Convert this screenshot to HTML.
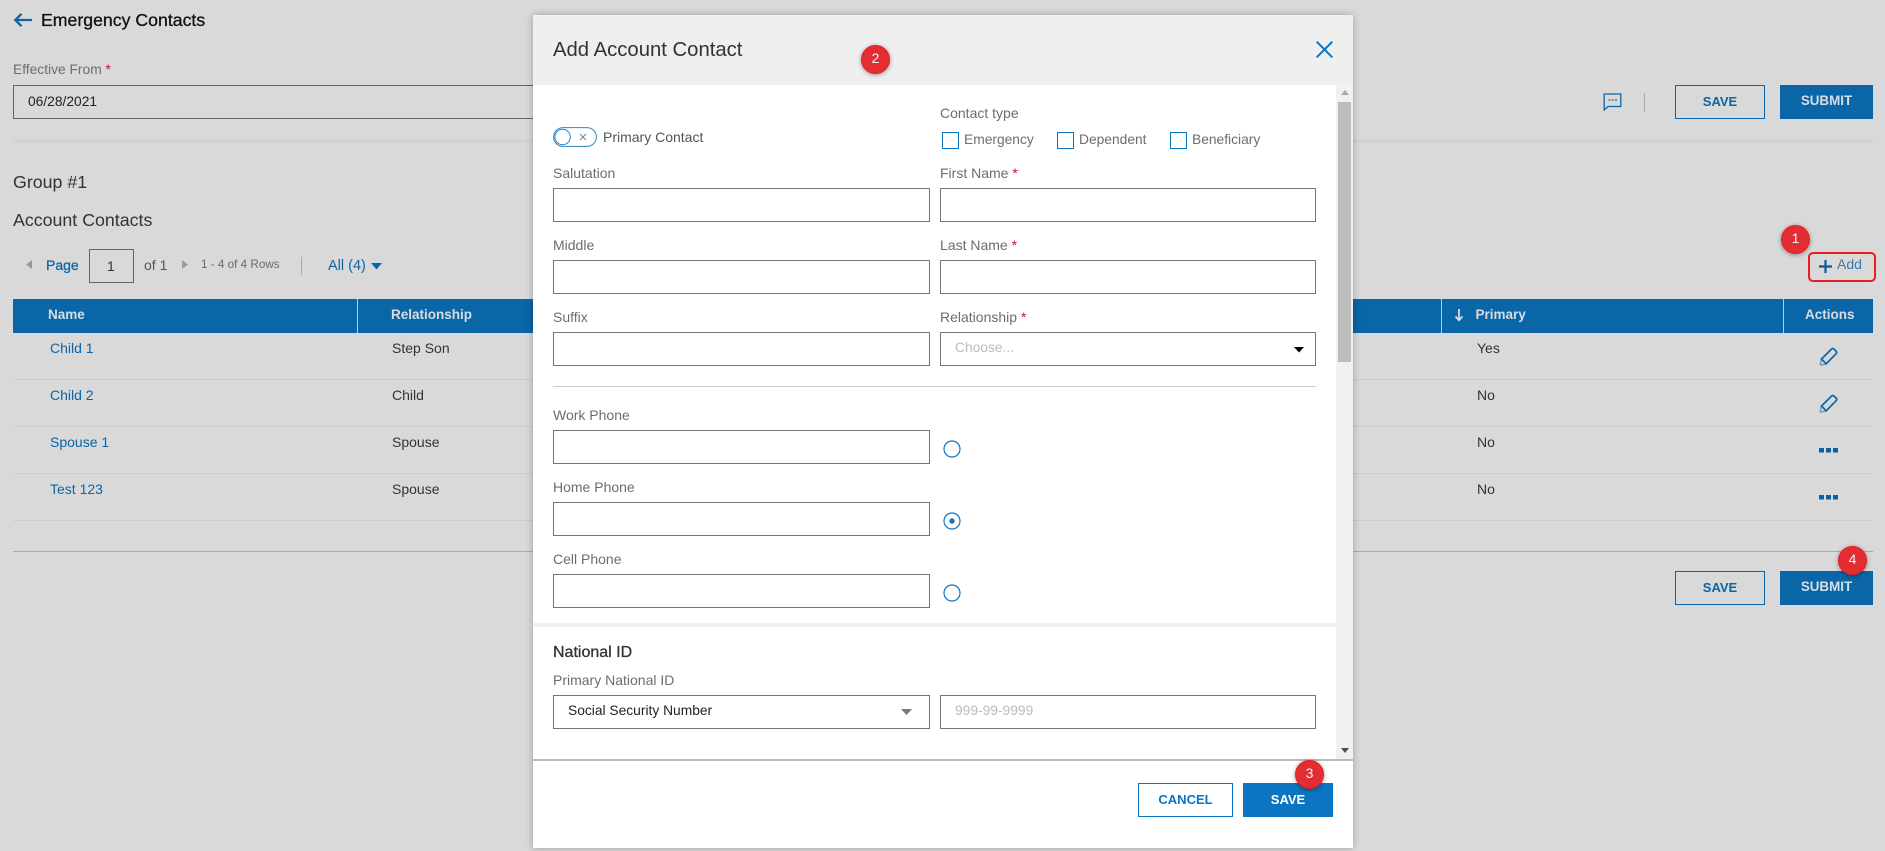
<!DOCTYPE html>
<html lang="en"><head><meta charset="utf-8"><title>Emergency Contacts</title>
<style>
html,body{margin:0;padding:0;width:1885px;height:851px;overflow:hidden;background:#d9d9d9;font-family:"Liberation Sans",Arial,sans-serif}
#p{position:relative;width:1885px;height:851px;overflow:hidden}
#p div,#p span.a,#p svg{position:absolute}
.t{position:absolute;white-space:nowrap;line-height:20px;height:20px;font-size:14px}
.l{color:#6d6d6d}
.d{color:#333}
.b{color:#0a66a6}
.m{-webkit-text-stroke:.3px currentColor}
.r{color:#c8102e}
.i{box-sizing:border-box;border:1px solid #757575;background:#fff;height:34px}
.i0{box-sizing:border-box;border:1px solid #666;height:34px}
.h{color:#d6dde3;font-weight:bold;font-size:13.5px}
.ln{left:13px;width:1860px;height:1px;background:#cdcdcd}
.btn{box-sizing:border-box;height:34px;text-align:center;line-height:31px;font-size:13px;font-weight:bold}
.bd{box-sizing:border-box;width:29px;height:29px;border-radius:50%;background:#e22d33;border:1.5px solid #ee1c1c;color:#f4f4f4;text-align:center;font-size:14px;line-height:24px;box-shadow:0 1px 5px rgba(0,0,0,.4);z-index:9}
.cb{box-sizing:border-box;width:17px;height:17px;border:1px solid #0b75c1;top:132px}
</style></head><body><div id="p">

<!-- background page -->
<svg style="left:13px;top:12px" width="20" height="16" viewBox="0 0 20 16"><path d="M19 8H2.500M8.500 1.800 2.300 8l6.200 6.200" fill="none" stroke="#0a66a6" stroke-width="2.300"/></svg>
<span class="t m" style="left:41px;top:10px;font-size:17.700px;color:#111">Emergency Contacts</span>
<span class="t l" style="left:13px;top:60px;font-size:13.800px">Effective From <span class="r">*</span></span>
<div class="i0" style="left:13px;top:85px;width:530px"></div>
<span class="t" style="left:28px;top:92px;color:#222;font-size:13.800px">06/28/2021</span>
<div style="left:13px;top:139px;width:1860px;height:4px;background:#d3d3d3"></div>
<span class="t d" style="left:13px;top:172px;font-size:17.800px">Group #1</span>
<span class="t d" style="left:13px;top:210px;font-size:17.800px">Account Contacts</span>

<svg style="left:25px;top:259px" width="8" height="12"><path d="M7 1v9L1 5.500z" fill="#9a9a9a"/></svg>
<span class="t b m" style="left:46px;top:255px">Page</span>
<div class="i0" style="left:89px;top:249px;width:45px"></div>
<span class="t d" style="left:107px;top:256px">1</span>
<span class="t" style="left:144px;top:255px;color:#555">of 1</span>
<svg style="left:181px;top:259px" width="8" height="12"><path d="M1 1v9l6-4.500z" fill="#9a9a9a"/></svg>
<span class="t" style="left:201px;top:255px;font-size:11.700px;color:#6a6a6a">1 - 4 of 4 Rows</span>
<div style="left:301px;top:257px;width:1px;height:18px;background:#aaa"></div>
<span class="t b" style="left:328px;top:256px;font-size:14.500px">All (4)</span>
<svg style="left:371px;top:263px" width="11" height="7"><path d="M0 0h11L5.500 6.500z" fill="#0a66a6"/></svg>

<span class="t" style="left:1837px;top:254px;font-size:14px;color:#3f7aa8">Add</span>
<svg style="left:1819px;top:260px" width="13" height="13"><path d="M6.500 0v13M0 6.500h13" stroke="#0a5a98" stroke-width="2.200"/></svg>
<div style="box-sizing:border-box;left:1808px;top:252px;width:68px;height:30px;border:2px solid #ea1c22;border-radius:5px"></div>
<div class="bd" style="left:1781px;top:225px">1</div>

<svg style="left:1603px;top:93px" width="19" height="18" viewBox="0 0 19 18"><path d="M1.200 1h16.600v12.500H5L1.200 17z" fill="none" stroke="#0a66a6" stroke-width="1.300"/><path d="M5.500 7h1.800M8.800 7h1.800M12.100 7h1.800" stroke="#0a66a6" stroke-width="1.300"/></svg>
<div style="left:1644px;top:93px;width:1px;height:19px;background:#aaa"></div>
<div class="btn b" style="left:1675px;top:85px;width:90px;border:1px solid #0a66a6">SAVE</div>
<div class="btn" style="left:1780px;top:85px;width:93px;background:#0a66a6;line-height:32px;color:#d3dfe8;font-size:13.400px">SUBMIT</div>

<!-- table -->
<div style="left:13px;top:299px;height:34px;background:#0a66a6;width:1860px"></div>
<div style="left:357px;top:299px;width:1px;height:34px;background:#b5c9d8"></div>
<div style="left:1441px;top:299px;width:1px;height:34px;background:#b5c9d8"></div>
<div style="left:1783px;top:299px;width:1px;height:34px;background:#b5c9d8"></div>
<span class="t h" style="left:48px;top:305px">Name</span>
<span class="t h" style="left:391px;top:305px">Relationship</span>
<svg style="left:1454px;top:309px" width="10" height="13" viewBox="0 0 10 13"><path d="M5 0v11M1.500 7.500 5 11.300l3.500-3.800" fill="none" stroke="#d6dde3" stroke-width="1.800"/></svg>
<span class="t h" style="left:1475.500px;top:305px">Primary</span>
<span class="t h" style="left:1805px;top:305px">Actions</span>

<span class="t b" style="left:50px;top:338px">Child 1</span><span class="t d" style="left:392px;top:338px">Step Son</span><span class="t d" style="left:1477px;top:338px">Yes</span>
<div class="ln" style="top:379px"></div>
<span class="t b" style="left:50px;top:385px">Child 2</span><span class="t d" style="left:392px;top:385px">Child</span><span class="t d" style="left:1477px;top:385px">No</span>
<div class="ln" style="top:426px"></div>
<span class="t b" style="left:50px;top:432px">Spouse 1</span><span class="t d" style="left:392px;top:432px">Spouse</span><span class="t d" style="left:1477px;top:432px">No</span>
<div class="ln" style="top:473px"></div>
<span class="t b" style="left:50px;top:479px">Test 123</span><span class="t d" style="left:392px;top:479px">Spouse</span><span class="t d" style="left:1477px;top:479px">No</span>
<div class="ln" style="top:520px"></div>
<div class="ln" style="top:551px;background:#aaa"></div>

<svg style="left:1819px;top:347px" width="19" height="19" viewBox="0 0 19 19"><path d="M1.200 18.200 2.300 12.600" fill="none" stroke="#6f9cbd" stroke-width="1.500"/><path d="M1.200 18.200 7 17" fill="none" stroke="#6f9cbd" stroke-width="1.500"/><path d="M2.500 12 12.500 2.100q1.300-1.200 2.600 0l2 2q1.200 1.300 0 2.600L7.200 16.800z" fill="none" stroke="#0a66a6" stroke-width="1.700"/></svg>
<svg style="left:1819px;top:394px" width="19" height="19" viewBox="0 0 19 19"><path d="M1.200 18.200 2.300 12.600" fill="none" stroke="#6f9cbd" stroke-width="1.500"/><path d="M1.200 18.200 7 17" fill="none" stroke="#6f9cbd" stroke-width="1.500"/><path d="M2.500 12 12.500 2.100q1.300-1.200 2.600 0l2 2q1.200 1.300 0 2.600L7.200 16.800z" fill="none" stroke="#0a66a6" stroke-width="1.700"/></svg>
<svg style="left:1819px;top:448px" width="19" height="5"><path d="M0 0h5v4.500H0zM7 0h5v4.500H7zM14 0h5v4.500h-5z" fill="#0a5fa0"/></svg>
<svg style="left:1819px;top:495px" width="19" height="5"><path d="M0 0h5v4.500H0zM7 0h5v4.500H7zM14 0h5v4.500h-5z" fill="#0a5fa0"/></svg>

<div class="btn b" style="left:1675px;top:571px;width:90px;border:1px solid #0a66a6">SAVE</div>
<div class="btn" style="left:1780px;top:571px;width:93px;background:#0a66a6;line-height:32px;color:#d3dfe8;font-size:13.400px">SUBMIT</div>
<div class="bd" style="left:1838px;top:546px">4</div>

<!-- modal -->
<div style="left:533px;top:15px;width:820px;height:833px;background:#fff;box-shadow:0 0 7px rgba(0,0,0,.28)"></div>
<div style="left:533px;top:15px;width:820px;height:70px;background:#efefef"></div>
<span class="t" style="left:553px;top:40px;font-size:20.300px;color:#333">Add Account Contact</span>
<div class="bd" style="left:861px;top:45px">2</div>
<svg style="left:1316px;top:41px" width="17" height="17" viewBox="0 0 17 17"><path d="M.7.7l15.600 15.600M16.300.7.700 16.300" stroke="#0b75c1" stroke-width="2"/></svg>

<!-- scrollbar -->
<div style="left:1336px;top:85px;width:17px;height:674px;background:#f1f1f1"></div>
<div style="left:1338px;top:102px;width:13px;height:260px;background:#bdbdbd"></div>
<svg style="left:1341px;top:90px" width="8" height="5"><path d="M4 0l4 5H0z" fill="#a8a8a8"/></svg>
<svg style="left:1341px;top:748px" width="8" height="5"><path d="M4 5l4-5H0z" fill="#505050"/></svg>

<svg style="left:553px;top:127px" width="44" height="20" viewBox="0 0 44 20"><rect x=".6" y=".6" width="42.800" height="18.800" rx="9.400" fill="#fff" stroke="#2a86cc" stroke-width="1"/><circle cx="9.600" cy="10" r="7.700" fill="#fff" stroke="#2a7fbf" stroke-width="1"/><path d="M27 7l6 6M33 7l-6 6" stroke="#5d87ad" stroke-width="1"/></svg>
<span class="t l" style="left:603px;top:126.500px;color:#555">Primary Contact</span>

<span class="t l" style="left:940px;top:103px">Contact type</span>
<div class="cb" style="left:942px"></div><span class="t l" style="left:964px;top:130px;font-size:13.800px">Emergency</span>
<div class="cb" style="left:1057px"></div><span class="t l" style="left:1079px;top:130px;font-size:13.800px">Dependent</span>
<div class="cb" style="left:1170px"></div><span class="t l" style="left:1192px;top:130px;font-size:13.800px">Beneficiary</span>

<span class="t l" style="left:553px;top:162.500px">Salutation</span>
<div class="i" style="left:553px;top:188px;width:377px"></div>
<span class="t l" style="left:940px;top:162.500px">First Name <span class="r">*</span></span>
<div class="i" style="left:940px;top:188px;width:376px"></div>

<span class="t l" style="left:553px;top:234.500px">Middle</span>
<div class="i" style="left:553px;top:260px;width:377px"></div>
<span class="t l" style="left:940px;top:234.500px">Last Name <span class="r">*</span></span>
<div class="i" style="left:940px;top:260px;width:376px"></div>

<span class="t l" style="left:553px;top:306.500px">Suffix</span>
<div class="i" style="left:553px;top:332px;width:377px"></div>
<span class="t l" style="left:940px;top:306.500px">Relationship <span class="r">*</span></span>
<div class="i" style="left:940px;top:332px;width:376px"></div>
<span class="t" style="left:955px;top:338px;color:#bbb;font-size:13.800px">Choose...</span>
<svg style="left:1294px;top:347px" width="10" height="6"><path d="M0 0h10L5 5.500z" fill="#000"/></svg>

<div style="left:553px;top:386px;width:763px;height:1px;background:#ccc"></div>

<span class="t l" style="left:553px;top:404.500px">Work Phone</span>
<div class="i" style="left:553px;top:430px;width:377px"></div>
<span class="t l" style="left:553px;top:476.500px">Home Phone</span>
<div class="i" style="left:553px;top:502px;width:377px"></div>
<span class="t l" style="left:553px;top:548.500px">Cell Phone</span>
<div class="i" style="left:553px;top:574px;width:377px"></div>

<svg style="left:943px;top:439.500px" width="18" height="18"><circle cx="9" cy="9" r="8" fill="none" stroke="#0b75c1" stroke-width="1.200"/></svg>
<svg style="left:943px;top:511.500px" width="18" height="18"><circle cx="9" cy="9" r="8" fill="none" stroke="#0b75c1" stroke-width="1.200"/><circle cx="9" cy="9" r="2.700" fill="#0b75c1"/></svg>
<svg style="left:943px;top:583.500px" width="18" height="18"><circle cx="9" cy="9" r="8" fill="none" stroke="#0b75c1" stroke-width="1.200"/></svg>

<div style="left:533px;top:623px;width:803px;height:4px;background:#f0f0f0"></div>
<span class="t m" style="left:553px;top:642.500px;font-size:16px;color:#333">National ID</span>
<span class="t l" style="left:553px;top:669.500px">Primary National ID</span>
<div class="i" style="left:553px;top:695px;width:377px"></div>
<span class="t" style="left:568px;top:700.500px;color:#222;font-size:13.800px">Social Security Number</span>
<svg style="left:901px;top:709px" width="11" height="7"><path d="M0 0h11L5.500 6z" fill="#777"/></svg>
<div class="i" style="left:940px;top:695px;width:376px"></div>
<span class="t" style="left:955px;top:700.500px;color:#bbb;font-size:13.800px">999-99-9999</span>

<div style="left:533px;top:759px;width:820px;height:2px;background:#bbb"></div>
<div class="btn" style="left:1138px;top:783px;width:95px;border:1px solid #0b75c1;color:#0b75c1">CANCEL</div>
<div class="btn" style="left:1243px;top:783px;width:90px;background:#0b75c1;color:#fff;line-height:33px">SAVE</div>
<div class="bd" style="left:1295px;top:760px">3</div>

</div></body></html>
